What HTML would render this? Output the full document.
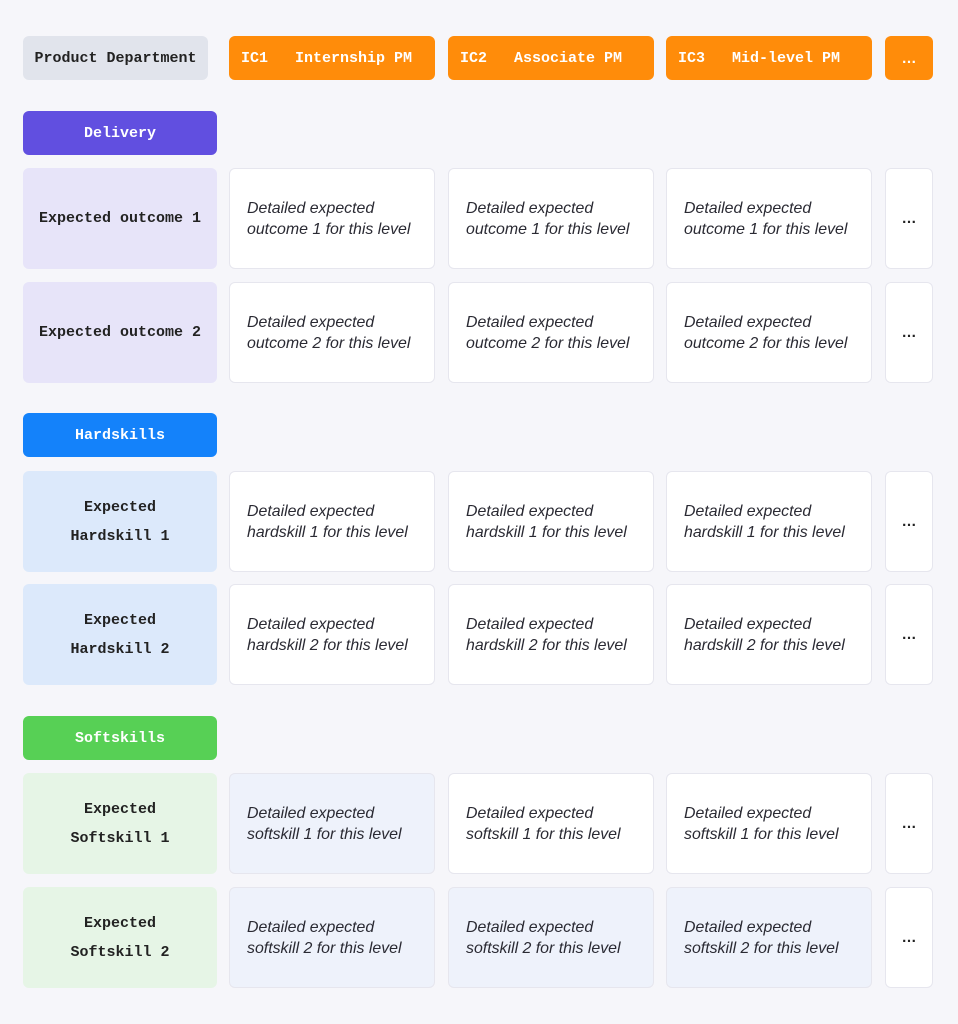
<!DOCTYPE html>
<html><head><meta charset="utf-8"><style>
body{margin:0;width:958px;height:1024px;background:#f6f6fa;position:relative;overflow:hidden}
.b{position:absolute;box-sizing:border-box;border-radius:6px;display:flex;align-items:center;font-family:"Liberation Mono",monospace;font-weight:bold;font-size:15px}
.m{justify-content:center;text-align:center;line-height:29px;color:#222}
.o{background:#ff8c0a;color:#fff;padding-left:12px;white-space:pre}
.c{background:#fff;border:1px solid #e6e6ee;font-family:"Liberation Sans",sans-serif;font-style:italic;font-weight:normal;color:#2a2a33;padding-left:17px;line-height:21px;font-size:15.9px}
.t{background:#eef2fb}
.d{background:#fff;border:1px solid #e6e6ee;justify-content:center;color:#222;font-family:"Liberation Sans",sans-serif}
.s{color:#fff;justify-content:center}
</style></head><body>
<div class="b m" style="left:23px;top:36px;width:185px;height:44px;background:#e1e4ec">Product Department</div>
<div class="b o" style="left:229px;top:36px;width:206px;height:44px">IC1   Internship PM</div>
<div class="b o" style="left:448px;top:36px;width:206px;height:44px">IC2   Associate PM</div>
<div class="b o" style="left:666px;top:36px;width:206px;height:44px">IC3   Mid-level PM</div>
<div class="b o" style="left:885px;top:36px;width:48px;height:44px;padding-left:0;justify-content:center;font-family:'Liberation Sans',sans-serif">…</div>

<div class="b s" style="left:23px;top:111px;width:194px;height:44px;background:#614fe0">Delivery</div>
<div class="b s" style="left:23px;top:413px;width:194px;height:44px;background:#1482fa">Hardskills</div>
<div class="b s" style="left:23px;top:716px;width:194px;height:44px;background:#57d055">Softskills</div>

<div class="b m" style="left:23px;top:168px;width:194px;height:101px;background:#e7e4f9">Expected outcome 1</div>
<div class="b m" style="left:23px;top:282px;width:194px;height:101px;background:#e7e4f9">Expected outcome 2</div>
<div class="b m" style="left:23px;top:471px;width:194px;height:101px;background:#dce9fb">Expected<br>Hardskill 1</div>
<div class="b m" style="left:23px;top:584px;width:194px;height:101px;background:#dce9fb">Expected<br>Hardskill 2</div>
<div class="b m" style="left:23px;top:773px;width:194px;height:101px;background:#e6f5e6">Expected<br>Softskill 1</div>
<div class="b m" style="left:23px;top:887px;width:194px;height:101px;background:#e6f5e6">Expected<br>Softskill 2</div>

<div class="b c" style="left:229px;top:168px;width:206px;height:101px">Detailed expected<br>outcome 1 for this level</div>
<div class="b c" style="left:448px;top:168px;width:206px;height:101px">Detailed expected<br>outcome 1 for this level</div>
<div class="b c" style="left:666px;top:168px;width:206px;height:101px">Detailed expected<br>outcome 1 for this level</div>
<div class="b d" style="left:885px;top:168px;width:48px;height:101px">…</div>

<div class="b c" style="left:229px;top:282px;width:206px;height:101px">Detailed expected<br>outcome 2 for this level</div>
<div class="b c" style="left:448px;top:282px;width:206px;height:101px">Detailed expected<br>outcome 2 for this level</div>
<div class="b c" style="left:666px;top:282px;width:206px;height:101px">Detailed expected<br>outcome 2 for this level</div>
<div class="b d" style="left:885px;top:282px;width:48px;height:101px">…</div>

<div class="b c" style="left:229px;top:471px;width:206px;height:101px">Detailed expected<br>hardskill 1 for this level</div>
<div class="b c" style="left:448px;top:471px;width:206px;height:101px">Detailed expected<br>hardskill 1 for this level</div>
<div class="b c" style="left:666px;top:471px;width:206px;height:101px">Detailed expected<br>hardskill 1 for this level</div>
<div class="b d" style="left:885px;top:471px;width:48px;height:101px">…</div>

<div class="b c" style="left:229px;top:584px;width:206px;height:101px">Detailed expected<br>hardskill 2 for this level</div>
<div class="b c" style="left:448px;top:584px;width:206px;height:101px">Detailed expected<br>hardskill 2 for this level</div>
<div class="b c" style="left:666px;top:584px;width:206px;height:101px">Detailed expected<br>hardskill 2 for this level</div>
<div class="b d" style="left:885px;top:584px;width:48px;height:101px">…</div>

<div class="b c t" style="left:229px;top:773px;width:206px;height:101px">Detailed expected<br>softskill 1 for this level</div>
<div class="b c" style="left:448px;top:773px;width:206px;height:101px">Detailed expected<br>softskill 1 for this level</div>
<div class="b c" style="left:666px;top:773px;width:206px;height:101px">Detailed expected<br>softskill 1 for this level</div>
<div class="b d" style="left:885px;top:773px;width:48px;height:101px">…</div>

<div class="b c t" style="left:229px;top:887px;width:206px;height:101px">Detailed expected<br>softskill 2 for this level</div>
<div class="b c t" style="left:448px;top:887px;width:206px;height:101px">Detailed expected<br>softskill 2 for this level</div>
<div class="b c t" style="left:666px;top:887px;width:206px;height:101px">Detailed expected<br>softskill 2 for this level</div>
<div class="b d" style="left:885px;top:887px;width:48px;height:101px">…</div>
</body></html>
